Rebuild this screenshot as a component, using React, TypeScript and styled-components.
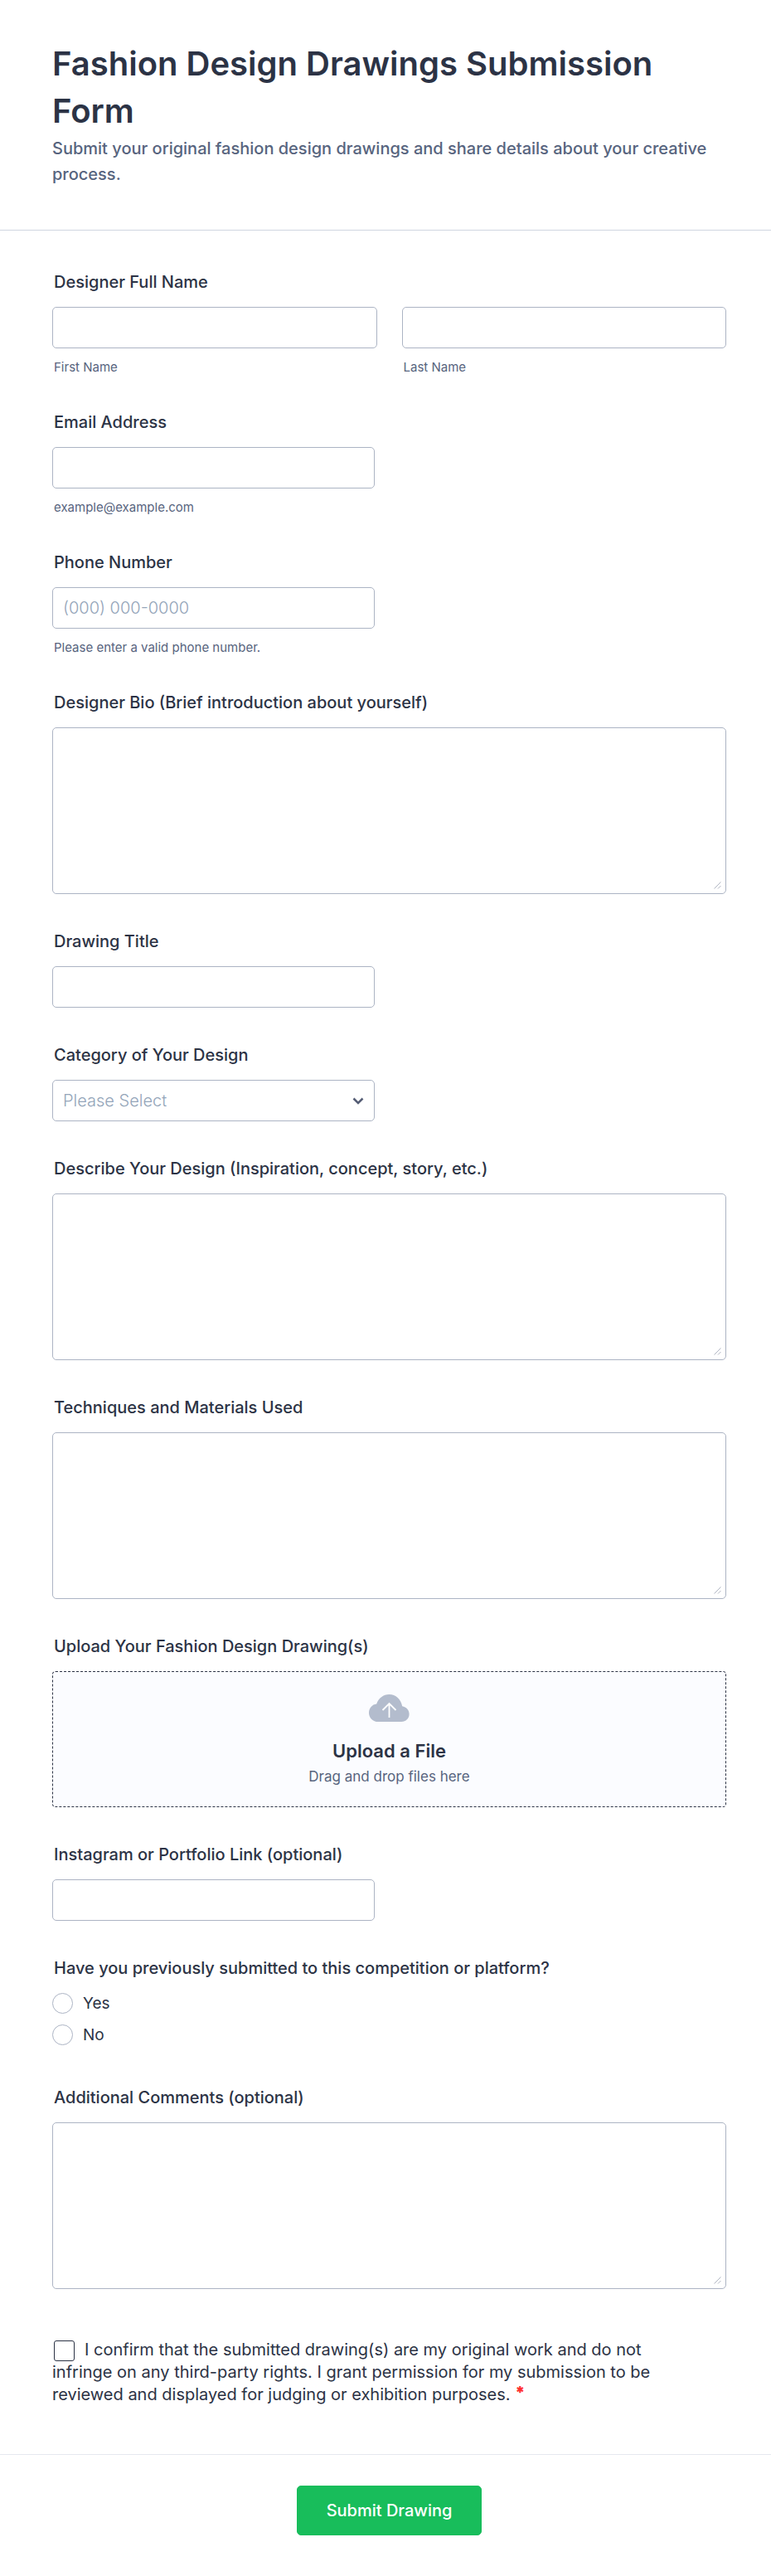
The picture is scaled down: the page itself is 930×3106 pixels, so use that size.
import React from "react";
import styled, { createGlobalStyle, css } from "styled-components";

const ink = "#2c3345";
const muted = "#57647e";
const line = "#acb4c4";

const GlobalStyle = createGlobalStyle`
  *, *::before, *::after { box-sizing: border-box; }
  body {
    margin: 0;
    background: #fff;
    color: ${ink};
    font-family: Inter, "Liberation Sans", sans-serif;
    font-size: 20px;
  }
`;

const Header = styled.header`
  padding: 48px 54px 51px 63px;
  border-bottom: 1px solid #d0d6e1;
`;

const Title = styled.h1`
  margin: 0;
  font-size: 40px;
  font-weight: 600;
  line-height: 57px;
`;

const Subtitle = styled.p`
  margin: 2px 0 0;
  color: ${muted};
  font-weight: 500;
  line-height: 31px;
`;

const Questions = styled.div`
  display: flex;
  flex-direction: column;
  gap: 45px;
  padding: 50px 54px 58px 63px;
`;

const fieldLayout = css`
  display: flex;
  flex-direction: column;
  align-items: flex-start;
`;

const Field = styled.div`
  ${fieldLayout}
`;

const FieldGroup = styled.fieldset`
  ${fieldLayout}
  min-width: 0;
  margin: 0;
  padding: 0;
  border: 0;
`;

const labelText = css`
  margin: 0 0 17px;
  padding: 0 2px;
  font-weight: 500;
  line-height: 25px;
`;

const Label = styled.label`
  ${labelText}
`;

const Legend = styled.legend`
  ${labelText}
`;

const NameColumns = styled.div`
  display: grid;
  grid-template-columns: 1fr 1fr;
  gap: 30px;
  width: 100%;
`;

const NameColumn = styled.div`
  display: flex;
  flex-direction: column;
`;

const Hint = styled.label`
  margin-top: 14px;
  padding: 0 2px;
  color: ${muted};
  font-size: 15px;
  line-height: 18px;
`;

const control = css`
  margin: 0;
  border: 1px solid ${line};
  border-radius: 5px;
  background: #fff;
  color: ${ink};
  font: inherit;
`;

const TextInput = styled.input<{ $wide?: boolean }>`
  ${control}
  width: 100%;
  max-width: ${(p) => (p.$wide ? "none" : "389px")};
  height: 50px;
  padding: 0 12px;
  &::placeholder {
    color: #94a5b9;
    font-weight: 300;
    opacity: 1;
  }
`;

const TextArea = styled.textarea`
  ${control}
  display: block;
  width: 100%;
  height: 201px;
  padding: 12px;
  resize: vertical;
  &::-webkit-resizer {
    background: url("data:image/svg+xml,%3Csvg xmlns='http://www.w3.org/2000/svg' width='15' height='15'%3E%3Cpath d='M1.500 9.500L9.500 1.500M6 9.500L9.500 6' stroke='%23b0b5c2' fill='none'/%3E%3C/svg%3E")
      no-repeat;
  }
`;

const SelectWrap = styled.div`
  display: grid;
  align-items: center;
  width: 100%;
  max-width: 389px;
  > * { grid-area: 1 / 1; }
  > svg {
    justify-self: end;
    margin-right: 13px;
    pointer-events: none;
  }
`;

const Select = styled.select`
  ${control}
  appearance: none;
  width: 100%;
  height: 50px;
  padding: 0 40px 0 12px;
  color: #94a5b9;
  font-weight: 300;
`;

const DropZone = styled.label`
  display: flex;
  flex-direction: column;
  align-items: center;
  width: 100%;
  height: 164px;
  padding-top: 27px;
  border: 1px dashed ${ink};
  border-radius: 4px;
  background: #fbfcff;
  cursor: pointer;
`;

const HiddenFile = styled.input`
  width: 1px;
  height: 1px;
  opacity: 0;
  position: absolute;
`;

const DropTitle = styled.span`
  margin-top: 21px;
  font-size: 22px;
  font-weight: 600;
  line-height: 28px;
`;

const DropHint = styled.span`
  margin-top: 5px;
  color: ${muted};
  font-size: 17px;
  line-height: 24px;
`;

const Options = styled.div`
  display: flex;
  flex-direction: column;
  gap: 13px;
  padding-bottom: 6px;
`;

const Option = styled.label`
  display: flex;
  align-items: center;
  gap: 12px;
  font-size: 19px;
  line-height: 25px;
`;

const Radio = styled.input`
  appearance: none;
  width: 25px;
  height: 25px;
  margin: 0;
  border: 1px solid ${line};
  border-radius: 50%;
  background: #fff;
  &:checked { border: 7px solid ${ink}; }
`;

const Terms = styled.label`
  display: block;
  padding: 15px 70px 0 0;
  line-height: 27px;
`;

const Checkbox = styled.input`
  appearance: none;
  width: 25px;
  height: 25px;
  margin: -4px 12px -4px 2px;
  border: 1px solid ${ink};
  border-radius: 3px;
  background: #fff;
  vertical-align: middle;
  &:checked { background: ${ink}; }
`;

const Required = styled.span`
  color: #ff2f2f;
  font-weight: 900;
  line-height: 1;
  vertical-align: 2px;
`;

const Footer = styled.footer`
  display: flex;
  justify-content: center;
  padding: 37px 54px 49px 63px;
  border-top: 1px solid #e6e8ef;
`;

const Submit = styled.button`
  height: 60px;
  padding: 0 35px;
  border: 1px solid #18bd5b;
  border-radius: 5px;
  background: #18bd5b;
  color: #fff;
  font: inherit;
  font-weight: 500;
  cursor: pointer;
`;

function CloudIcon() {
  return (
    <svg width="49" height="33" viewBox="0 0 49 33" aria-hidden="true">
      <path
        d="M11 33C5 33 0 28.200 0 22.400C0 16.500 4 12.200 9.200 11.600C11.600 4.600 17.400 0 24.500 0C32.400 0 38.600 5.700 40.200 14.200C45 15 48.600 18.800 48.600 23.800C48.600 29 44.500 33 39.200 33Z"
        fill="#b3bccd"
      />
      <path
        d="M24.500 28V11M16.500 19L24.500 11L32.500 19"
        fill="none"
        stroke="#fff"
        strokeWidth="1.800"
      />
    </svg>
  );
}

function ChevronIcon() {
  return (
    <svg width="14" height="9" viewBox="0 0 14 9" aria-hidden="true">
      <path d="M1.500 1.500L7 7L12.500 1.500" fill="none" stroke="#555d75" strokeWidth="2.500" />
    </svg>
  );
}

type TextFieldProps = {
  id: string;
  label: string;
  type?: string;
  placeholder?: string;
  hint?: string;
};

function TextField({ id, label, type = "text", placeholder, hint }: TextFieldProps) {
  return (
    <Field>
      <Label htmlFor={id}>{label}</Label>
      <TextInput id={id} name={id} type={type} placeholder={placeholder} />
      {hint && <Hint htmlFor={id}>{hint}</Hint>}
    </Field>
  );
}

function LongField({ id, label }: { id: string; label: string }) {
  return (
    <Field>
      <Label htmlFor={id}>{label}</Label>
      <TextArea id={id} name={id} />
    </Field>
  );
}

export default function App() {
  return (
    <>
      <GlobalStyle />
      <form onSubmit={(e) => e.preventDefault()}>
        <Header>
          <Title>Fashion Design Drawings Submission Form</Title>
          <Subtitle>
            Submit your original fashion design drawings and share details about your creative
            process.
          </Subtitle>
        </Header>
        <Questions>
          <FieldGroup>
            <Legend>Designer Full Name</Legend>
            <NameColumns>
              <NameColumn>
                <TextInput $wide id="first" name="first" type="text" />
                <Hint htmlFor="first">First Name</Hint>
              </NameColumn>
              <NameColumn>
                <TextInput $wide id="last" name="last" type="text" />
                <Hint htmlFor="last">Last Name</Hint>
              </NameColumn>
            </NameColumns>
          </FieldGroup>
          <TextField id="email" type="email" label="Email Address" hint="example@example.com" />
          <TextField
            id="phone"
            type="tel"
            label="Phone Number"
            placeholder="(000) 000-0000"
            hint="Please enter a valid phone number."
          />
          <LongField id="bio" label="Designer Bio (Brief introduction about yourself)" />
          <TextField id="title" label="Drawing Title" />
          <Field>
            <Label htmlFor="category">Category of Your Design</Label>
            <SelectWrap>
              <Select id="category" name="category" defaultValue="">
                <option value="">Please Select</option>
              </Select>
              <ChevronIcon />
            </SelectWrap>
          </Field>
          <LongField
            id="description"
            label="Describe Your Design (Inspiration, concept, story, etc.)"
          />
          <LongField id="techniques" label="Techniques and Materials Used" />
          <Field>
            <Label htmlFor="files">Upload Your Fashion Design Drawing(s)</Label>
            <DropZone>
              <HiddenFile id="files" name="files" type="file" multiple />
              <CloudIcon />
              <DropTitle>Upload a File</DropTitle>
              <DropHint>Drag and drop files here</DropHint>
            </DropZone>
          </Field>
          <TextField id="portfolio" type="url" label="Instagram or Portfolio Link (optional)" />
          <FieldGroup>
            <Legend>Have you previously submitted to this competition or platform?</Legend>
            <Options>
              <Option>
                <Radio type="radio" name="previous" value="yes" />
                Yes
              </Option>
              <Option>
                <Radio type="radio" name="previous" value="no" />
                No
              </Option>
            </Options>
          </FieldGroup>
          <LongField id="comments" label="Additional Comments (optional)" />
          <Terms>
            <Checkbox type="checkbox" name="terms" />
            I confirm that the submitted drawing(s) are my original work and do not infringe on any
            third-party rights. I grant permission for my submission to be reviewed and displayed
            for judging or exhibition purposes. <Required>*</Required>
          </Terms>
        </Questions>
        <Footer>
          <Submit type="submit">Submit Drawing</Submit>
        </Footer>
      </form>
    </>
  );
}
